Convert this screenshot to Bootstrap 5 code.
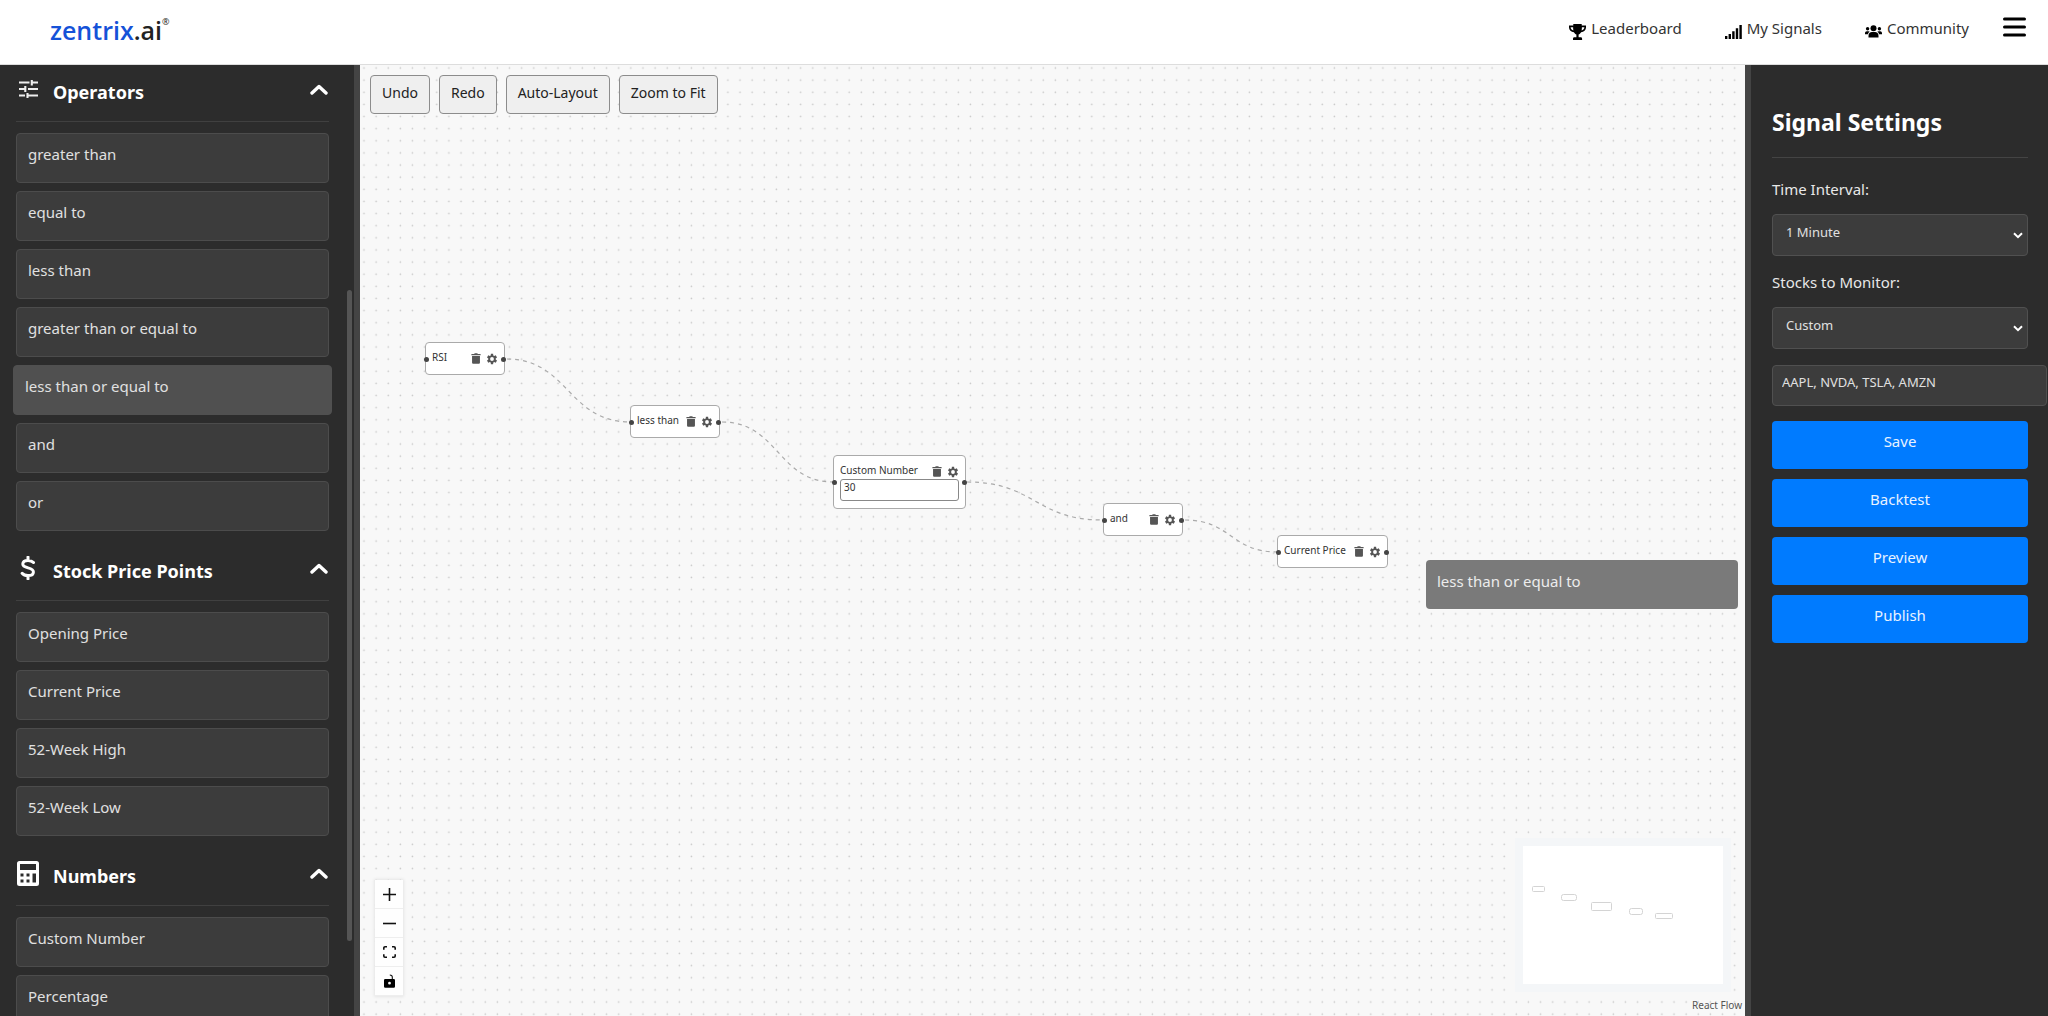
<!DOCTYPE html>
<html lang="en">
<head>
<meta charset="utf-8">
<meta name="viewport" content="width=device-width, initial-scale=1">
<title>zentrix.ai - Signal Builder</title>
<link href="https://cdn.jsdelivr.net/npm/bootstrap@5.3.0/dist/css/bootstrap.min.css" rel="stylesheet">
<style>
  body { font-family: "Noto Sans", "Open Sans", sans-serif; font-size: 15px; line-height: 20px; color: #333; }
  button, select, input { font-family: inherit; }

  /* top bar */
  .top-bar { height: 65px; border-bottom: 1px solid #ddd; background: #fff; padding: 0 22px 0 50px; }
  .brand { font: 600 25px/32px "Open Sans", "Noto Sans", sans-serif; color: #222; padding-bottom: 4px; }
  .brand b { font-weight: 600; color: #1552d8; }
  .brand sup { font-size: 9px; font-weight: 400; top: -15px; }
  .top-links { gap: 43px; padding-bottom: 8px; }
  .top-links a { color: #333; gap: 5px; }
  .top-links svg { margin-top: 7px; }
  .menu-btn { margin-left: 34px; padding-bottom: 12px; }

  /* sidebar */
  .side { width: 360px; background: #2c2c2c; border-right: 6px solid #444; color: #e0e0e0; }
  .side-scroll { padding: 0 25px 0 16px; }
  .side-rail { top: 225px; right: 2px; width: 5px; height: 651px; border-radius: 3px; background: #555; }
  .group + .group { margin-top: 13px; }
  .group-head { height: 57px; border: 0; border-bottom: 1px solid #404040; background: none; color: #fff; padding: 0 1px 8px 0; }
  .group-head h2 { font-size: 18px; line-height: 24px; font-weight: 700; padding-top: 6px; }
  .group-icon { width: 24px; margin-right: 13px; }
  .block-list { gap: 8px; padding-top: 11px; }
  .block { height: 50px; border: 1px solid #4c4c4c; border-radius: 4px; background: #3c3c3c; padding: 10px 11px; cursor: grab; }
  .block.is-dragged { background: #505050; border-color: #505050; margin: 0 -3px; }

  /* canvas */
  .flow { background: #f8f8f8; }
  .tools { gap: 9px; padding: 10px; }
  .tool { height: 39px; border: 1px solid #8c8c8c; border-radius: 4px; background: #efefef; color: #222; font-size: 14px; line-height: 20px; padding: 7px 11px 10px; }
  .node { background: #fff; border: 1px solid #aaa; border-radius: 4px; color: #333; font-size: 10px; line-height: 14px; padding: 7px 6px 6px; height: 33px; }
  .node-tall { height: 54px; }
  .node-tall input { height: 22px; margin-top: 1px; border: 1px solid #888; border-radius: 3px; font-size: 10px; color: #333; padding: 0 3px 6px; }
  .node-tools { gap: 5px; padding-top: 3px; }
  .node-tools button, .ctrl button, .menu-btn { border: 0; background: none; }
  .node-tools button { padding: 0; }
  .port::before, .port-out::after { content: ""; position: absolute; top: calc(50% - 2px); width: 5px; height: 5px; border-radius: 50%; background: #444; }
  .port::before { left: -2px; }
  .port-out::after { right: -2px; }
  .ghost { width: 312px; height: 49px; border-radius: 4px; background: #7a7a7a; color: #ececec; padding: 11px; }
  .ctrl { left: 15px; bottom: 20px; box-shadow: 0 0 3px 1px rgba(0,0,0,.08); }
  .ctrl button { width: 28px; height: 29px; background: #fefefe; border-bottom: 1px solid #eee; padding: 0; }
  .mini { right: 14px; bottom: 24px; background: #f4f6f8; padding: 8px; }
  .credit { right: 3px; bottom: 3px; font-size: 10px; line-height: 16px; color: #555; }

  /* settings */
  .settings { width: 303px; background: #2c2c2c; border-left: 6px solid #444; color: #e8e8e8; padding: 42px 20px 0 21px; }
  .settings h1 { font-size: 23px; line-height: 30px; font-weight: 700; color: #fff; padding-bottom: 20px; margin-bottom: 21px; border-bottom: 1px solid #444; }
  .settings label { margin-bottom: 15px; }
  .field { width: 100%; height: 42px; border: 1px solid #505050; border-radius: 4px; background-color: #3c3c3c; color: #e0e0e0; font-size: 13px; line-height: 20px; padding: 7px 13px 13px; margin-bottom: 16px; }
  select.field { appearance: none; background-image: url("data:image/svg+xml,%3Csvg xmlns='http://www.w3.org/2000/svg' viewBox='0 0 10 7'%3E%3Cpath d='M1 1.2l4 4 4-4' fill='none' stroke='white' stroke-width='2'/%3E%3C/svg%3E"); background-repeat: no-repeat; background-size: 10px 7px; background-position: right 4px top 17px; }
  input.field { width: calc(100% + 19px); height: 41px; padding: 6px 9px 13px; margin-bottom: 15px; }
  .act { height: 48px; border: 0; border-radius: 4px; background: #007bff; color: #e8f2ff; font-size: 15px; line-height: 20px; padding: 10px 0 18px; }
  .acts { gap: 10px; }
</style>
</head>
<body class="vh-100 d-flex flex-column overflow-hidden">

<svg class="d-none">
  <symbol id="i-trash" viewBox="0 0 10 12"><path d="M0 1h3l.6-.8h2.800L7 1h3v1.500H0zM.7 3.200h8.600V10.600a1.200 1.200 0 0 1-1.200 1.200H1.900A1.200 1.200 0 0 1 .7 10.600z" fill="#555"/></symbol>
  <symbol id="i-gear" viewBox="0 0 24 24"><path fill="#555" fill-rule="evenodd" d="M19.400 13a7.500 7.500 0 0 0 0-2l2.600-2-2.500-4.400-3.100 1.300a7.500 7.500 0 0 0-1.800-1L14.200 1.500H9.800l-.4 3.400a7.500 7.500 0 0 0-1.800 1L4.500 4.600 2 9l2.600 2a7.500 7.500 0 0 0 0 2L2 15l2.500 4.400 3.100-1.300a7.500 7.500 0 0 0 1.800 1l.4 3.400h4.400l.4-3.400a7.500 7.500 0 0 0 1.800-1l3.100 1.300L22 15zM12 15.800a3.800 3.800 0 1 1 0-7.600 3.800 3.800 0 0 1 0 7.600z"/></symbol>
  <symbol id="i-up" viewBox="0 0 18 11"><path d="M2 9l7-6.500L16 9" fill="none" stroke="#fff" stroke-width="3.400" stroke-linecap="round" stroke-linejoin="round"/></symbol>
</svg>

<header class="top-bar d-flex align-items-center flex-shrink-0">
  <a class="brand text-decoration-none me-auto" href="#"><b>zentrix</b>.ai<sup>®</sup></a>
  <nav class="top-links d-flex">
    <a class="d-flex align-items-center text-decoration-none" href="#">
      <svg width="17" height="16" viewBox="0 0 17 16"><path d="M4.300 0h8.400v1.600H17v1.800c0 2.500-2.200 4.300-4.900 4.800-.7 1.200-1.600 2-2.500 2.300v2.700h2.200c.8 0 1.300.6 1.300 1.500V16H4v-1.300c0-.9.5-1.500 1.300-1.500h2.100v-2.700c-.9-.3-1.800-1.100-2.500-2.300C2.200 7.700 0 5.900 0 3.400V1.600h4.300zM1.600 3.200c0 1.500 1.200 2.600 2.800 3.200-.2-.9-.3-2-.3-3.200zm13.800 0h-2.500c0 1.200-.1 2.300-.3 3.200 1.600-.6 2.800-1.700 2.800-3.200z"/></svg>
      Leaderboard</a>
    <a class="d-flex align-items-center text-decoration-none" href="#">
      <svg width="17" height="14" viewBox="0 0 17 14"><path d="M0 11h2.400v3H0zM3.600 9H6v5H3.600zM7.200 6.300h2.400V14H7.200zM10.800 3.300h2.400V14h-2.400zM14.400 0h2.400v14h-2.400z"/></svg>
      My Signals</a>
    <a class="d-flex align-items-center text-decoration-none" href="#">
      <svg width="17" height="13" viewBox="0 0 17 13"><circle cx="8.500" cy="3.300" r="3"/><circle cx="2.600" cy="3.800" r="1.700"/><circle cx="14.400" cy="3.800" r="1.700"/><path d="M3.500 12.500v-1.800C3.500 8.500 5 7.100 7 7.100h3c2 0 3.500 1.400 3.500 3.600v1.800zM0 9.200V8.100C0 7 .8 6.200 1.800 6.200h1.600c.6 0 1 .2 1.300.6-1 .6-1.600 1.400-1.800 2.400zM17 9.200V8.100c0-1.100-.8-1.900-1.800-1.900h-1.600c-.6 0-1 .2-1.300.6 1 .6 1.600 1.400 1.800 2.400z"/></svg>
      Community</a>
  </nav>
  <button class="menu-btn px-0" aria-label="Menu">
    <svg class="d-block" width="23" height="20" viewBox="0 0 23 20"><path d="M1.500 2h20M1.500 10h20M1.500 18h20" stroke="#000" stroke-width="3" stroke-linecap="round"/></svg>
  </button>
</header>

<div class="d-flex flex-grow-1 overflow-hidden">

  <aside class="side position-relative flex-shrink-0 overflow-hidden">
    <div class="side-scroll">
      <section class="group">
        <button class="group-head d-flex align-items-center w-100 text-start">
          <span class="group-icon d-flex justify-content-center"><svg width="19" height="18" viewBox="0 0 19 18"><path d="M0 2.500h10.500M15 2.500h4M12.800 0v5.500M0 9h3.500M9 9h10M6.300 6v6M0 15.500h6M11 15.500h8M8.500 13v5M8.500 15.500h3M3 9h3M12 2.500h4" fill="none" stroke="#eee" stroke-width="2.100"/></svg></span>
          <h2 class="m-0 flex-grow-1">Operators</h2>
          <svg width="18" height="11"><use href="#i-up"/></svg>
        </button>
        <div class="block-list d-flex flex-column">
          <div class="block" draggable="true">greater than</div>
          <div class="block" draggable="true">equal to</div>
          <div class="block" draggable="true">less than</div>
          <div class="block" draggable="true">greater than or equal to</div>
          <div class="block is-dragged" draggable="true">less than or equal to</div>
          <div class="block" draggable="true">and</div>
          <div class="block" draggable="true">or</div>
        </div>
      </section>
      <section class="group">
        <button class="group-head d-flex align-items-center w-100 text-start">
          <span class="group-icon d-flex justify-content-center"><svg width="16" height="24" viewBox="0 0 16 24"><path d="M8 1v3.500M8 19.500V23M13.500 6.500C12.200 5 10 4.400 8 4.400c-3 0-5.200 1.300-5.200 3.700 0 5 10.600 2.600 10.600 7.800 0 2.400-2.400 3.700-5.400 3.700-2.400 0-4.600-.7-5.900-2.300" fill="none" stroke="#fff" stroke-width="3" stroke-linecap="round"/></svg></span>
          <h2 class="m-0 flex-grow-1">Stock Price Points</h2>
          <svg width="18" height="11"><use href="#i-up"/></svg>
        </button>
        <div class="block-list d-flex flex-column">
          <div class="block" draggable="true">Opening Price</div>
          <div class="block" draggable="true">Current Price</div>
          <div class="block" draggable="true">52-Week High</div>
          <div class="block" draggable="true">52-Week Low</div>
        </div>
      </section>
      <section class="group">
        <button class="group-head d-flex align-items-center w-100 text-start">
          <span class="group-icon d-flex justify-content-center"><svg width="22" height="25" viewBox="0 0 22 25"><path fill="#fff" fill-rule="evenodd" d="M2.500 0h17A2.500 2.500 0 0 1 22 2.500v20a2.500 2.500 0 0 1-2.500 2.500h-17A2.500 2.500 0 0 1 0 22.500v-20A2.500 2.500 0 0 1 2.500 0zM3 3v6h16V3zM3.500 12.500v3h3v-3zM9.500 12.500v3h3v-3zM15.500 12.500v9H19v-9zM3.500 18.500v3h3v-3zM9.500 18.500v3h3v-3z"/></svg></span>
          <h2 class="m-0 flex-grow-1">Numbers</h2>
          <svg width="18" height="11"><use href="#i-up"/></svg>
        </button>
        <div class="block-list d-flex flex-column">
          <div class="block" draggable="true">Custom Number</div>
          <div class="block" draggable="true">Percentage</div>
        </div>
      </section>
    </div>
    <div class="side-rail position-absolute"></div>
  </aside>

  <main class="flow position-relative flex-grow-1 overflow-hidden">
    <svg class="position-absolute top-0 start-0 w-100 h-100">
      <defs><pattern id="dots" x="-2" y="-3" width="12.130" height="12.130" patternUnits="userSpaceOnUse"><circle cx="6" cy="6" r=".8" fill="#c8c8c8"/></pattern></defs>
      <rect width="100%" height="100%" fill="url(#dots)"/>
      <g fill="none" stroke="#aaa" stroke-width="1.200" stroke-dasharray="4 4">
        <path d="M147 294C208 294 208 357 270 357"/>
        <path d="M362 357C418 357 418 417 473 417"/>
        <path d="M607 417C675 417 675 455 743 455"/>
        <path d="M825 455C871 455 871 487 917 487"/>
      </g>
    </svg>

    <div class="tools position-relative d-flex">
      <button class="tool">Undo</button>
      <button class="tool">Redo</button>
      <button class="tool">Auto-Layout</button>
      <button class="tool">Zoom to Fit</button>
    </div>

    <div class="node port port-out position-absolute" style="left:65px;top:277px;width:80px">
      <div class="d-flex justify-content-between align-items-start"><span>RSI</span>
        <span class="node-tools d-flex"><button class="d-flex" aria-label="Delete"><svg width="10" height="11"><use href="#i-trash"/></svg></button><button class="d-flex" aria-label="Settings"><svg width="12" height="12"><use href="#i-gear"/></svg></button></span></div>
    </div>
    <div class="node port port-out position-absolute" style="left:270px;top:340px;width:90px">
      <div class="d-flex justify-content-between align-items-start"><span>less than</span>
        <span class="node-tools d-flex"><button class="d-flex" aria-label="Delete"><svg width="10" height="11"><use href="#i-trash"/></svg></button><button class="d-flex" aria-label="Settings"><svg width="12" height="12"><use href="#i-gear"/></svg></button></span></div>
    </div>
    <div class="node node-tall port port-out position-absolute" style="left:473px;top:390px;width:133px">
      <div class="d-flex justify-content-between align-items-start"><label for="num">Custom Number</label>
        <span class="node-tools d-flex"><button class="d-flex" aria-label="Delete"><svg width="10" height="11"><use href="#i-trash"/></svg></button><button class="d-flex" aria-label="Settings"><svg width="12" height="12"><use href="#i-gear"/></svg></button></span></div>
      <input id="num" class="d-block w-100" type="text" value="30">
    </div>
    <div class="node port port-out position-absolute" style="left:743px;top:438px;width:80px">
      <div class="d-flex justify-content-between align-items-start"><span>and</span>
        <span class="node-tools d-flex"><button class="d-flex" aria-label="Delete"><svg width="10" height="11"><use href="#i-trash"/></svg></button><button class="d-flex" aria-label="Settings"><svg width="12" height="12"><use href="#i-gear"/></svg></button></span></div>
    </div>
    <div class="node port port-out position-absolute" style="left:917px;top:470px;width:111px">
      <div class="d-flex justify-content-between align-items-start"><span>Current Price</span>
        <span class="node-tools d-flex"><button class="d-flex" aria-label="Delete"><svg width="10" height="11"><use href="#i-trash"/></svg></button><button class="d-flex" aria-label="Settings"><svg width="12" height="12"><use href="#i-gear"/></svg></button></span></div>
    </div>

    <div class="ghost position-absolute" style="left:1066px;top:495px">less than or equal to</div>

    <div class="ctrl position-absolute d-flex flex-column">
      <button class="d-flex align-items-center justify-content-center" aria-label="Zoom in"><svg width="13" height="13" viewBox="0 0 13 13"><path d="M6.500 0v13M0 6.500h13" stroke="#111" stroke-width="1.600"/></svg></button>
      <button class="d-flex align-items-center justify-content-center" aria-label="Zoom out"><svg width="13" height="13" viewBox="0 0 13 13"><path d="M0 6.500h13" stroke="#111" stroke-width="1.600"/></svg></button>
      <button class="d-flex align-items-center justify-content-center" aria-label="Fit view"><svg width="13" height="12" viewBox="0 0 13 12"><path d="M.8 3.800V2A1.200 1.200 0 0 1 2 .8h2M9 .8h2A1.200 1.200 0 0 1 12.200 2v1.800M12.200 8.200V10a1.200 1.200 0 0 1-1.200 1.200H9M4 11.200H2A1.200 1.200 0 0 1 .8 10V8.200" fill="none" stroke="#111" stroke-width="1.600"/></svg></button>
      <button class="d-flex align-items-center justify-content-center" aria-label="Lock"><svg width="11" height="14" viewBox="0 0 11 14"><path fill-rule="evenodd" d="M1.200 5H9.800A1.200 1.200 0 0 1 11 6.200v6.300a1.200 1.200 0 0 1-1.200 1.200H1.200A1.200 1.200 0 0 1 0 12.500V6.200A1.200 1.200 0 0 1 1.200 5zM5.500 7.800a1.400 1.400 0 1 0 0 2.800 1.400 1.400 0 0 0 0-2.800z"/><path d="M8.300 5V3.200C8.300 1.800 7.200 1 5.800 1" fill="none" stroke="#111" stroke-width="1.100"/></svg></button>
    </div>

    <div class="mini position-absolute">
      <svg class="d-block" width="200" height="138" viewBox="0 0 200 138"><rect width="200" height="138" fill="#fff"/>
        <g fill="#fff" stroke="#d4d4d4"><rect x="9.500" y="40.500" width="12" height="5" rx="1"/><rect x="38.500" y="48.500" width="15" height="6" rx="2"/><rect x="68.500" y="56.500" width="20" height="8" rx="1"/><rect x="106.500" y="62.500" width="13" height="6" rx="2"/><rect x="132.500" y="67.500" width="17" height="5" rx="1"/></g></svg>
    </div>
    <a class="credit position-absolute text-decoration-none" href="#">React Flow</a>
  </main>

  <aside class="settings flex-shrink-0">
    <h1>Signal Settings</h1>
    <label class="d-block" for="interval">Time Interval:</label>
    <select id="interval" class="field d-block"><option>1 Minute</option></select>
    <label class="d-block" for="stocks">Stocks to Monitor:</label>
    <select id="stocks" class="field d-block"><option>Custom</option></select>
    <input class="field d-block" type="text" value="AAPL, NVDA, TSLA, AMZN" aria-label="Symbols">
    <div class="acts d-flex flex-column">
      <button class="act">Save</button>
      <button class="act">Backtest</button>
      <button class="act">Preview</button>
      <button class="act">Publish</button>
    </div>
  </aside>
</div>

<script src="https://cdn.jsdelivr.net/npm/bootstrap@5.3.0/dist/js/bootstrap.bundle.min.js"></script>
</body>
</html>
